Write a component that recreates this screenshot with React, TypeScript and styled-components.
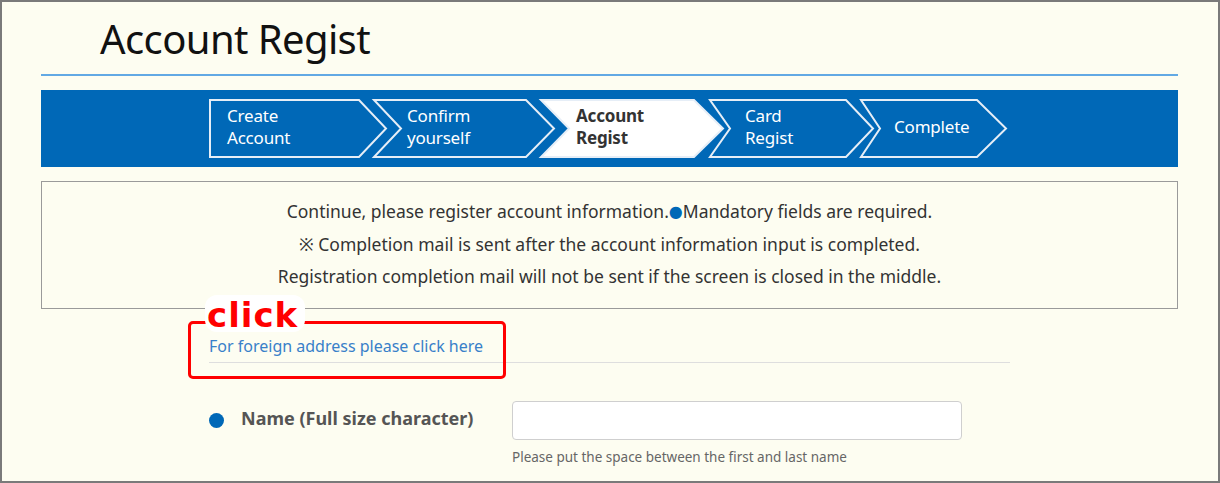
import React from "react";
import styled, { createGlobalStyle } from "styled-components";

const GlobalStyle = createGlobalStyle`
  html, body { margin: 0; padding: 0; background: #fdfdf1; }
  * { box-sizing: border-box; }
`;

const Frame = styled.div`
  width: 1220px;
  height: 483px;
  border: 2px solid #7a7a7a;
  background: #fdfdf1;
  padding: 0 40px 0 39px;
  overflow: hidden;
  font-family: "Noto Sans", "Noto Sans CJK JP", sans-serif;
`;

const Title = styled.h1`
  margin: 11px 0 0 59px;
  font-size: 40px;
  line-height: 52px;
  font-weight: 400;
  letter-spacing: -0.6px;
  color: #111;
`;

const Rule = styled.div`
  margin-top: 9px;
  height: 2px;
  background: #62a9e4;
`;

const StepBar = styled.div`
  margin-top: 14px;
  height: 77px;
  background: #0068b7;
  display: flex;
  align-items: center;
  padding-left: 168px;
`;

const Step = styled.div<{ $w: number; $ml: number; $pl: number }>`
  position: relative;
  flex: none;
  width: ${(p) => p.$w}px;
  height: 59px;
  margin-left: ${(p) => p.$ml}px;
  padding-left: ${(p) => p.$pl}px;
  padding-bottom: 4px;
  display: flex;
  align-items: center;
`;

const StepShape = styled.svg`
  position: absolute;
  left: 0;
  top: 0;
  width: 100%;
  height: 100%;
  overflow: visible;
`;

const StepLabel = styled.div<{ $active?: boolean }>`
  position: relative;
  font-size: 17px;
  line-height: 21.5px;
  color: ${(p) => (p.$active ? "#333" : "#fff")};
  font-weight: ${(p) => (p.$active ? 700 : 400)};
  letter-spacing: -0.2px;
`;

const Notice = styled.div`
  margin-top: 14px;
  height: 128px;
  border: 1px solid #9a9a9a;
  padding-top: 13px;
  text-align: center;
  color: #333;
  font-size: 17.5px;
  line-height: 32.5px;
`;

const NoticeLine = styled.div`
  height: 32.5px;
  overflow: visible;
  white-space: nowrap;
`;

const Mark = styled.span`
  color: #0068b7;
  font-family: "DejaVu Sans", sans-serif;
  font-size: 16px;
  line-height: 1;
  vertical-align: 1px;
`;

const Kome = styled.span`
  line-height: 1;
`;

const FormArea = styled.div`
  margin-left: 168px;
  width: 801px;
`;

const LinkSection = styled.div`
  position: relative;
  margin-top: 26px;
  padding-bottom: 5px;
  border-bottom: 1px solid #dedede;
`;

const ForeignLink = styled.a`
  display: block;
  font-size: 16px;
  line-height: 22px;
  color: #3880c9;
  text-decoration: none;
`;

const Highlight = styled.div`
  position: absolute;
  left: -21px;
  top: -14px;
  width: 318px;
  height: 58px;
  border: 3px solid #ff0000;
  border-radius: 5px;
`;

const ClickTag = styled.div`
  position: absolute;
  left: -4px;
  top: -40px;
  padding: 3px 7px 0 2px;
  background: #ffffff;
  border-radius: 12px;
  font-family: "DejaVu Sans", sans-serif;
  font-weight: 700;
  font-size: 34px;
  line-height: 34px;
  letter-spacing: 1px;
  color: #ff0000;
`;

const FieldRow = styled.div`
  margin-top: 38px;
  display: flex;
  align-items: flex-start;
`;

const RequiredDot = styled.span`
  flex: none;
  width: 15px;
  height: 15px;
  margin-top: 12px;
  margin-right: 17px;
  border-radius: 50%;
  background: #0068b7;
`;

const FieldLabel = styled.label`
  flex: none;
  width: 271px;
  height: 39px;
  line-height: 34px;
  font-size: 18px;
  font-weight: 700;
  color: #555;
`;

const FieldCol = styled.div`
  display: flex;
  flex-direction: column;
`;

const TextInput = styled.input`
  width: 450px;
  height: 39px;
  border: 1px solid #cfcfcf;
  border-radius: 4px;
  background: #fff;
  outline: none;
`;

const Hint = styled.div`
  margin-top: 8px;
  font-size: 13.5px;
  line-height: 18px;
  color: #666;
`;

type StepDef = {
  lines: string[];
  w: number;
  d: number;
  n: number;
  ml: number;
  pl: number;
  active?: boolean;
};

const steps: StepDef[] = [
  { lines: ["Create", "Account"], w: 178, d: 28, n: 0, ml: 0, pl: 18 },
  { lines: ["Confirm", "yourself"], w: 182, d: 29, n: 28, ml: -14, pl: 34 },
  { lines: ["Account", "Regist"], w: 184, d: 30, n: 29, ml: -15, pl: 36, active: true },
  { lines: ["Card", "Regist"], w: 165, d: 28, n: 21, ml: -15, pl: 36 },
  { lines: ["Complete"], w: 147, d: 30, n: 20, ml: -14, pl: 34 },
];

function points(s: StepDef) {
  const W = s.w;
  const base = `1,1 ${W - s.d},1 ${W - 1},29.5 ${W - s.d},58 1,58`;
  return s.n ? `${base} ${s.n},29.5` : base;
}

export default function App() {
  return (
    <>
      <GlobalStyle />
      <Frame>
        <Title>Account Regist</Title>
        <Rule />
        <StepBar>
          {steps.map((s, i) => (
            <Step key={i} $w={s.w} $ml={s.ml} $pl={s.pl}>
              <StepShape viewBox={`0 0 ${s.w} 59`}>
                <polygon
                  points={points(s)}
                  fill={s.active ? "#ffffff" : "none"}
                  stroke="#e6eef7"
                  strokeWidth={2}
                  strokeLinejoin="miter"
                />
              </StepShape>
              <StepLabel $active={s.active}>
                {s.lines.map((l, j) => (
                  <div key={j}>{l}</div>
                ))}
              </StepLabel>
            </Step>
          ))}
        </StepBar>
        <Notice>
          <NoticeLine>
            Continue, please register account information.<Mark>●</Mark>Mandatory fields are required.
          </NoticeLine>
          <NoticeLine>
            <Kome>※</Kome> Completion mail is sent after the account information input is completed.
          </NoticeLine>
          <NoticeLine>
            Registration completion mail will not be sent if the screen is closed in the middle.
          </NoticeLine>
        </Notice>
        <FormArea>
          <LinkSection>
            <ForeignLink href="#">For foreign address please click here</ForeignLink>
            <Highlight />
            <ClickTag>click</ClickTag>
          </LinkSection>
          <FieldRow>
            <RequiredDot />
            <FieldLabel>Name (Full size character)</FieldLabel>
            <FieldCol>
              <TextInput type="text" />
              <Hint>Please put the space between the first and last name</Hint>
            </FieldCol>
          </FieldRow>
        </FormArea>
      </Frame>
    </>
  );
}
